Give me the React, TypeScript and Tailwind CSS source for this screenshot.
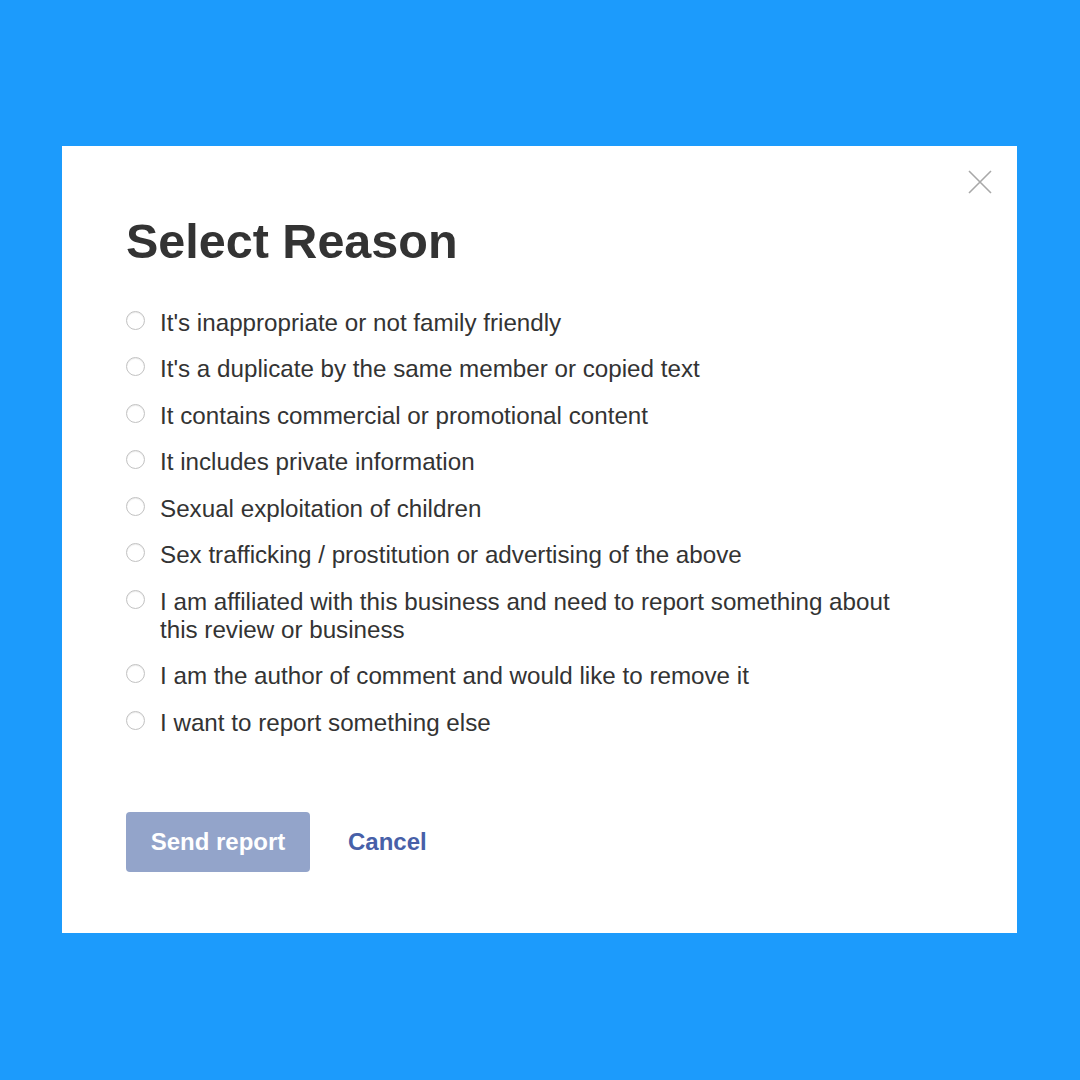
import { useState } from 'react'

const reasons = [
  "It's inappropriate or not family friendly",
  "It's a duplicate by the same member or copied text",
  'It contains commercial or promotional content',
  'It includes private information',
  'Sexual exploitation of children',
  'Sex trafficking / prostitution or advertising of the above',
  'I am affiliated with this business and need to report something about this review or business',
  'I am the author of comment and would like to remove it',
  'I want to report something else',
]

function CloseIcon() {
  return (
    <svg width="24" height="24" viewBox="0 0 24 24" fill="none">
      <path d="M1 1L23 23M23 1L1 23" stroke="#a8a8a8" strokeWidth="1.6" />
    </svg>
  )
}

export default function App() {
  const [picked, setPicked] = useState<number | null>(null)

  return (
    <div
      className="w-[1080px] h-[1080px] bg-[#1c9bfc] pt-[146px] pl-[62px]"
      style={{ fontFamily: '"Liberation Sans", Arial, sans-serif' }}
    >
      <div className="relative w-[955px] h-[787px] bg-white pt-[71px] pl-[64px]">
        <button className="absolute top-[24px] right-[25px]">
          <CloseIcon />
        </button>

        <h1 className="text-[48.5px] leading-none font-bold text-[#333333]">Select Reason</h1>

        {/* Reason list */}
        <ul className="mt-[43px] flex flex-col gap-[18.5px]">
          {reasons.map((r, i) => (
            <li
              key={r}
              className="flex items-start cursor-pointer"
              onClick={() => setPicked(i)}
            >
              <span className="mt-[2px] w-[19px] h-[19px] rounded-full border border-[#c2c2c2] bg-white flex-shrink-0 flex items-center justify-center shadow-[inset_0_1px_1px_rgba(0,0,0,0.08)]">
                {picked === i && <span className="w-[8px] h-[8px] rounded-full bg-[#4a62a8]" />}
              </span>
              <span className="ml-[15px] max-w-[750px] text-[24.2px] leading-[28px] text-[#333333]">{r}</span>
            </li>
          ))}
        </ul>

        <div className="mt-[75px] flex items-center gap-[38px]">
          <button className="w-[184px] h-[60px] rounded-[4px] bg-[#93a4ca] text-white text-[24px] font-bold">
            Send report
          </button>
          <button className="text-[24px] font-bold text-[#4760a8]">Cancel</button>
        </div>
      </div>
    </div>
  )
}
